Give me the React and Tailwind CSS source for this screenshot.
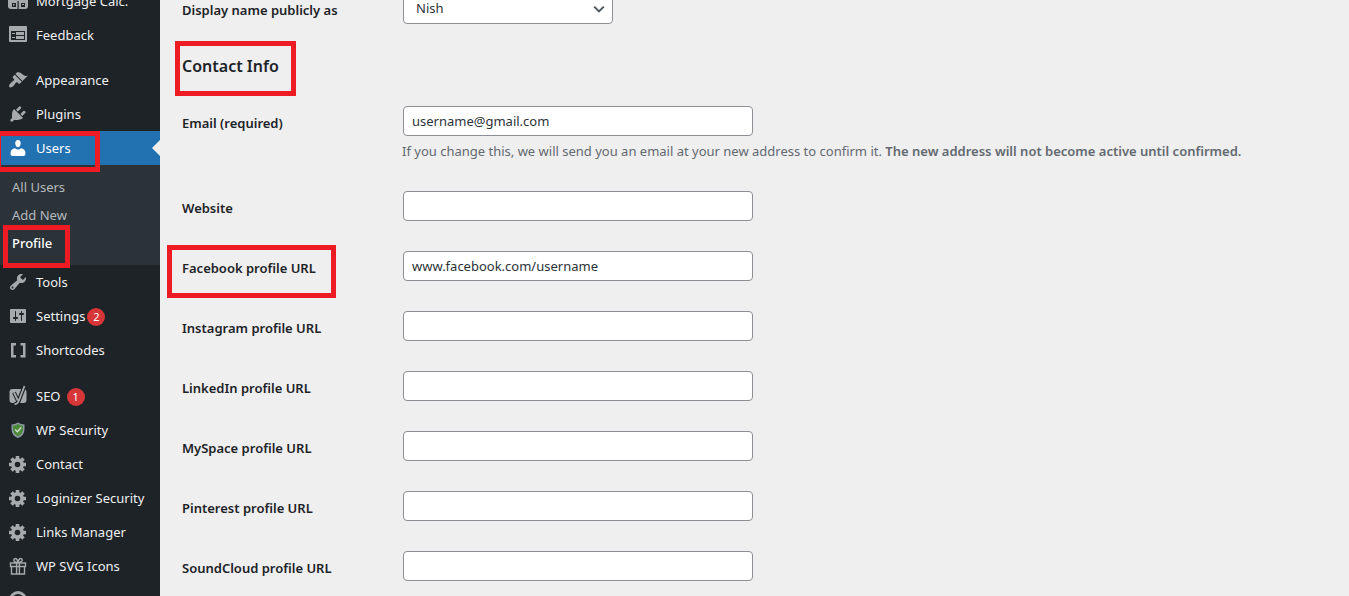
import React from "react";

const svg = (children) => (
  <svg viewBox="0 0 20 20" className="size-5 shrink-0 overflow-visible fill-current" aria-hidden="true">
    {children}
  </svg>
);

const gear = svg(
  <>
    <circle cx="9.500" cy="10.500" r="4.600" fill="none" stroke="currentColor" strokeWidth="3.600" />
    {[0, 45, 90, 135].map((a) => (
      <path key={a} transform={`rotate(${a} 9.5 10.5)`} d="M7.700 2h3.600v3.200H7.700zM7.700 15.800h3.600V19H7.700z" />
    ))}
  </>
);

const icons = {
  calc: svg(
    <path
      fillRule="evenodd"
      d="M2-2h16q2 0 2 2v15q0 3-3 3H3q-3 0-3-3V0Q0-2 2-2zM3 1v6h14V1zM4 12v4h4v-4zM5 13h1.500v1.500H5zM13 12v4h4v-4zM14 13h2v1h-2zM9.500 10h1.200v8H9.500z"
    />
  ),
  feedback: svg(
    <path d="M2 1h16c.55 0 1 .45 1 1v14c0 .55-.45 1-1 1H2c-.55 0-1-.45-1-1V2c0-.55.45-1 1-1zm15 14V6H3v9h14zM4 8v1h3V8H4zm4-1v3h8V7H8zm-4 5v1h3v-1H4zm4-1v3h8v-3H8z" />
  ),
  appearance: svg(
    <path d="M14.48 11.06L7.41 3.99l1.5-1.5c.5-.56 2.3-.47 3.51.32 1.21.8 1.43 1.28 2.91 2.1 1.18.64 2.45 1.26 4.45.85zm-.71.71L6.7 4.7 4.93 6.47c-.39.39-.39 1.02 0 1.41l1.06 1.06c.39.39.39 1.03 0 1.42-.6.6-1.43 1.11-2.21 1.69-.35.26-.7.53-1.01.84C1.43 14.23.4 16.08 1.4 17.07c.99 1 2.84-.03 4.18-1.36.31-.31.58-.66.85-1.02.57-.78 1.08-1.61 1.69-2.21.39-.39 1.02-.39 1.41 0l1.06 1.06c.39.39 1.02.39 1.41 0z" />
  ),
  plugins: svg(
    <path d="M13.11 4.36L9.87 7.6 8 5.73l3.24-3.24c.35-.34 1.05-.2 1.56.32.52.51.66 1.21.31 1.55zm-8 1.77l.91-1.12 9.01 9.01-1.19.84c-.71.71-2.63 1.16-3.82 1.16H6.14L4.9 17.26c-.59.59-1.54.59-2.12 0-.59-.58-.59-1.53 0-2.12l1.24-1.24v-3.88c0-1.13.4-3.19 1.09-3.89zm7.26 3.97l3.24-3.24c.34-.35 1.04-.21 1.55.31.52.51.66 1.21.31 1.55l-3.24 3.25z" />
  ),
  users: svg(
    <path d="M10 9.250c-2.270 0-2.730-3.440-2.730-3.440C7 4.020 7.820 2 9.970 2c2.160 0 2.980 2.020 2.710 3.810 0 0-.410 3.440-2.680 3.440zM7 10.200Q10 12.600 13 10.200C15.600 10.400 17.400 12.600 17.400 14.500V16.500Q17.300 17.900 15.500 18.100H4.500Q2.700 17.900 2.600 16.500V14.500C2.600 12.600 4.400 10.400 7 10.200z" />
  ),
  tools: svg(
    <path d="M16.68 9.77c-1.34 1.34-3.3 1.67-4.95.99l-5.41 6.52c-.99.99-2.59.99-3.58 0s-.99-2.59 0-3.57l6.52-5.42c-.68-1.65-.35-3.61.99-4.95 1.28-1.28 3.12-1.62 4.72-1.06l-2.89 2.89 2.82 2.82 2.86-2.87c.53 1.58.18 3.39-1.08 4.65zM3.81 16.21c.4.39 1.04.39 1.43 0 .4-.4.4-1.04 0-1.43-.39-.4-1.03-.4-1.43 0-.39.39-.39 1.03 0 1.43z" />
  ),
  settings: svg(
    <path d="M18 16V4c0-.55-.45-1-1-1H3c-.55 0-1 .45-1 1v12c0 .55.45 1 1 1h14c.55 0 1-.45 1-1zM8 11h1c.55 0 1 .45 1 1s-.45 1-1 1H8v1.5c0 .28-.22.5-.5.5s-.5-.22-.5-.5V13H6c-.55 0-1-.45-1-1s.45-1 1-1h1V5.500c0-.28.22-.5.5-.5s.5.22.5.5V11zm5-2h-1c-.55 0-1-.45-1-1s.45-1 1-1h1V5.500c0-.28.22-.5.5-.5s.5.22.5.5V7h1c.55 0 1 .45 1 1s-.45 1-1 1h-1v5.500c0 .28-.22.5-.5.5s-.5-.22-.5-.5V9z" />
  ),
  shortcodes: svg(<path d="M3 3h5v2.500H5.500v9.500H8v2.500H3zM12.500 3h5v14.500h-5V15H15V5.500h-2.500z" />),
  seo: svg(
    <>
      <rect x="1.500" y="3" width="17" height="14" rx="3" />
      <path d="M6 6.500 9.800 14.500M16.500 0 10.500 15.500Q9.500 18 6.500 18.300" fill="none" stroke="#1d2327" strokeWidth="4" />
      <path d="M6 6.500 9.800 14.500M16.500 0 10.500 15.500Q9.500 18 6.500 18.300" fill="none" stroke="currentColor" strokeWidth="1.800" />
    </>
  ),
  shield: svg(
    <>
      <path d="M10 2.500Q13 4.500 16.500 4.500V9q0 6.500-6.500 9-6.500-2.500-6.500-9V4.500Q7 4.500 10 2.500z" fill="#8f98a6" />
      <path d="M10 4Q12.500 5.500 15 5.700V9q0 5-5 7.500Q5 14 5 9V5.700Q7.500 5.500 10 4z" fill="#4d8a3c" />
      <path d="m7.200 9.500 2.200 2.300L13.200 7.500" fill="none" stroke="#d5dfd2" strokeWidth="1.300" />
    </>
  ),
  gear,
  gift: svg(
    <path
      fill="none"
      stroke="currentColor"
      strokeWidth="1.400"
      d="M2.500 7h15v3.500h-15zM3.500 10.500V18h13v-7.500M8.600 7v11M11.400 7v11M10 6.500C7 6.500 5 5 6 3.200 7.500 1.500 9.500 3 10 6.500 10.500 3 12.500 1.500 14 3.200 15 5 13 6.500 10 6.500z"
    />
  ),
  circle: svg(<circle cx="10" cy="10" r="7.500" fill="none" stroke="currentColor" strokeWidth="3" />),
};

const groups = [
  [
    { icon: "calc", label: "Mortgage Calc." },
    { icon: "feedback", label: "Feedback" },
  ],
  [
    { icon: "appearance", label: "Appearance" },
    { icon: "plugins", label: "Plugins" },
    { icon: "users", label: "Users", active: true, children: ["All Users", "Add New", "Profile"] },
    { icon: "tools", label: "Tools" },
    { icon: "settings", label: "Settings", count: 2, badgeGap: "-ml-[6px]" },
    { icon: "shortcodes", label: "Shortcodes" },
  ],
  [
    { icon: "seo", label: "SEO", count: 1, badgeGap: "-ml-[2px]" },
    { icon: "shield", label: "WP Security" },
    { icon: "gear", label: "Contact" },
    { icon: "gear", label: "Loginizer Security" },
    { icon: "gear", label: "Links Manager" },
    { icon: "gift", label: "WP SVG Icons" },
    { icon: "circle", label: "" },
  ],
];

function Highlight({ className }) {
  return <span aria-hidden="true" className={`pointer-events-none absolute z-10 border-[5px] border-[#ed1c24] ${className}`} />;
}

function MenuItem({ item }) {
  return (
    <li>
      <a
        href="#"
        className={`relative flex h-[34px] items-center gap-2 pl-2 ${item.active ? "bg-[#2271b1] text-white" : "text-[#f0f0f1]"}`}
      >
        <span className={item.active ? "text-white" : "text-[#a7aaad]"}>{icons[item.icon]}</span>
        <span className="pt-[2px] whitespace-nowrap">{item.label}</span>
        {item.count && (
          <span
            className={`mt-[2px] flex size-[18px] items-center justify-center rounded-full bg-[#d63638] text-[11px] text-white ${item.badgeGap}`}
          >
            {item.count}
          </span>
        )}
        {item.active && (
          <>
            <span className="absolute top-[9px] right-0 border-8 border-l-0 border-transparent border-r-[#efefef]" />
            <Highlight className="-left-1 top-0 h-[41px] w-[104px]" />
          </>
        )}
      </a>
      {item.children && (
        <ul className="bg-[#2c3338] py-2">
          {item.children.map((c) => (
            <li key={c} className="relative">
              <a
                href="#"
                className={`flex h-7 items-center pt-[2px] pl-3 ${c === "Profile" ? "font-medium text-white" : "text-[#b4b9be]"}`}
              >
                {c}
              </a>
              {c === "Profile" && <Highlight className="-top-1 left-[3px] h-[43px] w-[67px]" />}
            </li>
          ))}
        </ul>
      )}
    </li>
  );
}

function Field({ id, label, value, note, marked }) {
  return (
    <div className="flex pb-[30px]">
      <div className="relative w-[220px] shrink-0 pt-[7px]">
        <label htmlFor={id} className="block leading-5 font-semibold">
          {label}
        </label>
        {marked && <Highlight className="-top-[6px] -left-[15px] h-[53px] w-[169px]" />}
      </div>
      <div className="min-w-0 flex-1">
        <input
          id={id}
          type="text"
          defaultValue={value}
          className="mx-px block h-[30px] w-full max-w-[350px] rounded border border-[#8c8f94] bg-white px-2 text-[#2c3338]"
        />
        {note}
      </div>
    </div>
  );
}

const social = ["Instagram", "LinkedIn", "MySpace", "Pinterest", "SoundCloud"];

export default function App() {
  return (
    <div className="flex h-screen overflow-hidden bg-[#efefef] font-['Noto_Sans',sans-serif] text-[13px] text-[#1d2327]">
      <nav aria-label="Admin menu" className="w-40 shrink-0 bg-[#1d2327]">
        <div className="-mt-4 flex flex-col">
          {groups.map((g, i) => (
            <ul key={i} className={i === 0 ? "pb-[11px]" : "pb-3"}>
              {g.map((item, j) => (
                <MenuItem key={j} item={item} />
              ))}
            </ul>
          ))}
        </div>
      </nav>
      <main className="min-w-0 flex-1 pl-[22px]">
        <form className="-mt-[6px]">
          <div className="flex">
            <div className="w-[220px] shrink-0 pt-[6px]">
              <label htmlFor="display" className="block leading-5 font-semibold">
                Display name publicly as
              </label>
            </div>
            <div className="relative mx-px w-[210px]">
              <select
                id="display"
                className="block h-[30px] w-full appearance-none rounded border border-[#8c8f94] bg-white pl-3 text-[#2c3338]"
              >
                <option>Nish</option>
              </select>
              <svg viewBox="0 0 20 20" className="pointer-events-none absolute top-[7px] right-[6px] size-4" aria-hidden="true">
                <path d="m4 7 6 6 6-6" fill="none" stroke="#50575e" strokeWidth="2.500" />
              </svg>
            </div>
          </div>
          <div className="relative mt-8 mb-[30px]">
            <h2 className="text-base leading-5 font-semibold">Contact Info</h2>
            <Highlight className="-top-[15px] -left-[7px] h-[55px] w-[121px]" />
          </div>
          <Field
            id="email"
            label="Email (required)"
            value="username@gmail.com"
            note={
              <p className="mt-[5px] leading-5 text-[#646970]">
                If you change this, we will send you an email at your new address to confirm it.{" "}
                <strong className="font-semibold">The new address will not become active until confirmed.</strong>
              </p>
            }
          />
          <Field id="website" label="Website" />
          <Field id="facebook" label="Facebook profile URL" value="www.facebook.com/username" marked />
          {social.map((s) => (
            <Field key={s} id={s.toLowerCase()} label={`${s} profile URL`} />
          ))}
        </form>
      </main>
    </div>
  );
}
